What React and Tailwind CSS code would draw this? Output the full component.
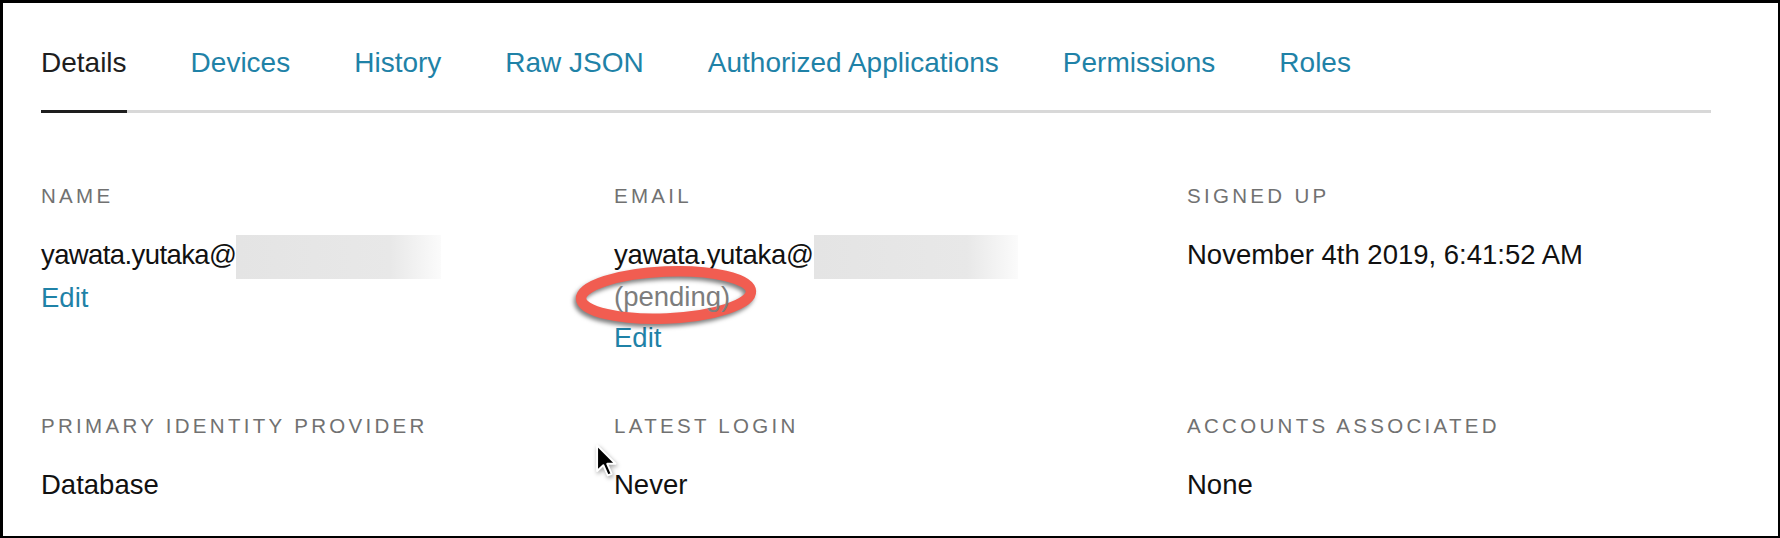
import React from "react";

const tabs = [
  "Details",
  "Devices",
  "History",
  "Raw JSON",
  "Authorized Applications",
  "Permissions",
  "Roles",
];

const Label = ({ children }) => (
  <div className="text-[20.5px] leading-[30px] tracking-[3.3px] uppercase text-[#717171]">
    {children}
  </div>
);

const Redacted = ({ w }) => (
  <span
    className="h-[44px] bg-linear-to-r from-[#e4e4e4] via-[#e8e8e8] via-75% to-[#fbfbfb] translate-y-[2px]"
    style={{ width: w }}
  />
);

const EmailLine = ({ w, wide }) => (
  <div className="flex items-center h-[41.5px]">
    <span className={wide ? "tracking-[-0.3px]" : "tracking-[-0.6px]"}>
      yawata.yutaka@
    </span>
    <Redacted w={w} />
  </div>
);

const Ellipse = () => (
  <svg
    className="absolute left-[-48px] top-[-16px] overflow-visible drop-shadow-[-2px_3px_2px_rgba(0,0,0,0.5)]"
    width="200"
    height="72"
    viewBox="0 0 200 72"
  >
    <ellipse
      cx="100"
      cy="35"
      rx="85"
      ry="23.5"
      fill="none"
      stroke="#f15d51"
      strokeWidth="10.5"
      transform="rotate(-2.5 100 35)"
    />
  </svg>
);

const Cursor = () => (
  <svg
    className="absolute left-[592px] top-[440px] drop-shadow-[1px_2px_2px_rgba(0,0,0,0.35)]"
    width="25"
    height="38"
    viewBox="0 0 18 27"
  >
    <path
      d="M1.5 1.5 L1.5 20 L6 15.8 L9.2 23.2 L12 22 L8.8 14.8 L14.8 14.8 Z"
      fill="#000"
      stroke="#fff"
      strokeWidth="1.4"
      strokeLinejoin="round"
    />
  </svg>
);

export default function App() {
  return (
    <div className="relative w-[1780px] h-[538px] bg-white border-black border-t-[3px] border-l-[3px] border-r-2 border-b-2 overflow-hidden font-['Liberation_Sans',Arial,sans-serif] text-[#111]">
      {/* tabs */}
      <nav className="ml-[38px] mt-[40px] w-[1670px] flex gap-[64px] border-b-[3px] border-[#d8d8d8]">
        {tabs.map((t, i) => (
          <div
            key={t}
            className={
              i === 0
                ? "text-[28px] leading-[40px] pb-[27px] -mb-[3px] border-b-[3px] border-[#1e1e1e] text-[#1e1e1e]"
                : "text-[28px] leading-[40px] pb-[27px] -mb-[3px] border-b-[3px] border-transparent text-[#1f82a7]"
            }
          >
            {t}
          </div>
        ))}
      </nav>

      {/* details */}
      <div className="ml-[38px] mt-[68px] grid grid-cols-[573px_573px_1fr] gap-y-[52px] text-[27.5px] leading-[41.5px]">
        <div>
          <Label>Name</Label>
          <div className="mt-[23px]">
            <EmailLine w={205} />
            <div className="text-[#1f82a7] mt-[1px]">Edit</div>
          </div>
        </div>

        <div>
          <Label>Email</Label>
          <div className="mt-[23px]">
            <EmailLine w={204} wide />
            <div className="relative w-fit text-[#7d7d7d]">
              <Ellipse />
              <span className="relative">(pending)</span>
            </div>
            <div className="text-[#1f82a7]">Edit</div>
          </div>
        </div>

        <div>
          <Label>Signed Up</Label>
          <div className="mt-[23px]">November 4th 2019, 6:41:52 AM</div>
        </div>

        <div>
          <Label>Primary Identity Provider</Label>
          <div className="mt-[23px]">Database</div>
        </div>

        <div>
          <Label>Latest Login</Label>
          <div className="mt-[23px]">Never</div>
        </div>

        <div>
          <Label>Accounts Associated</Label>
          <div className="mt-[23px]">None</div>
        </div>
      </div>

      <Cursor />
    </div>
  );
}
